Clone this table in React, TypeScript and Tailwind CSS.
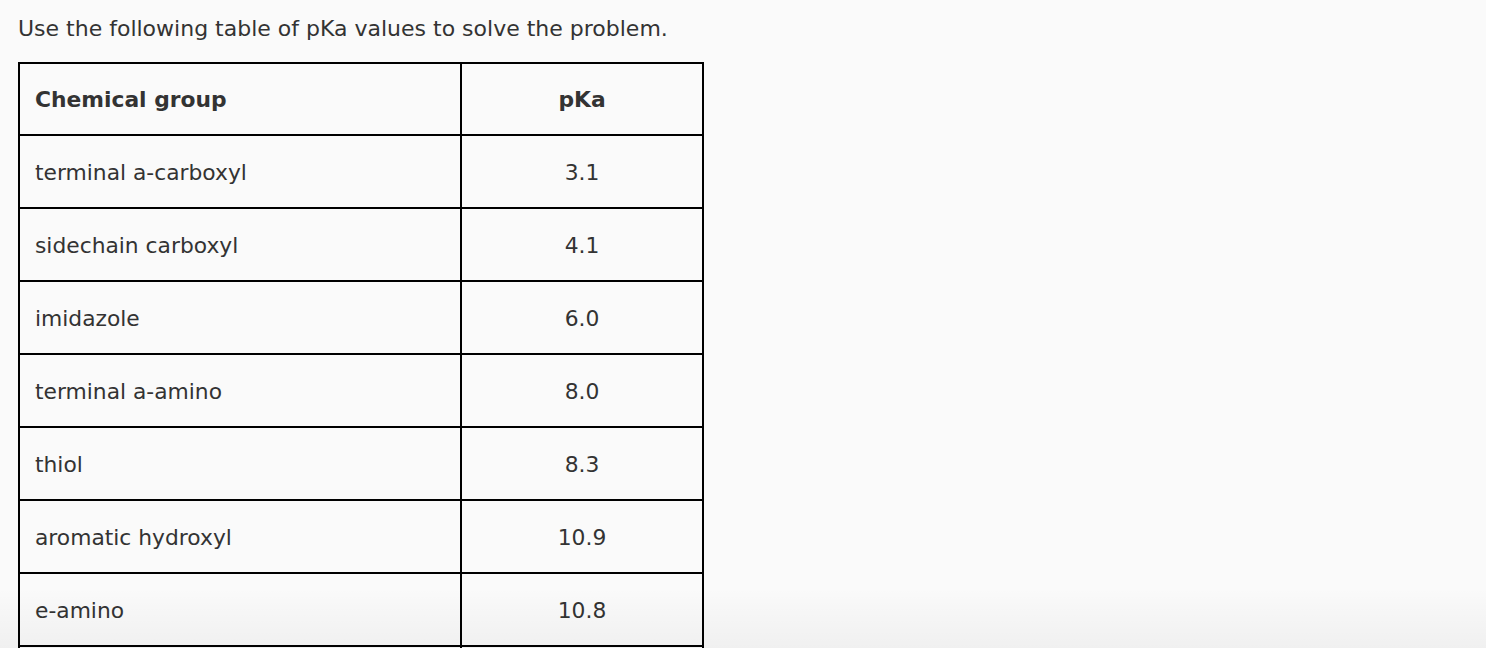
import React from "react";

const rows: [string, string][] = [
  ["terminal a-carboxyl", "3.1"],
  ["sidechain carboxyl", "4.1"],
  ["imidazole", "6.0"],
  ["terminal a-amino", "8.0"],
  ["thiol", "8.3"],
  ["aromatic hydroxyl", "10.9"],
  ["e-amino", "10.8"],
];

export default function App() {
  return (
    <div
      className="relative h-[648px] w-full overflow-hidden bg-[#fafafa] text-[#333]"
      style={{ fontFamily: '"DejaVu Sans", Verdana, sans-serif' }}
    >
      <div className="pl-[18px] pt-[14px]">
        <p className="text-[22px] leading-[30px]">
          Use the following table of pKa values to solve the problem.
        </p>
        <table className="mt-[18px] w-[686px] border-collapse text-[21.8px]">
          <colgroup>
            <col className="w-[442px]" />
            <col />
          </colgroup>
          <thead>
            <tr className="h-[72px]">
              <th className="border-2 border-black pl-[15px] pt-[3px] text-left font-bold">
                Chemical group
              </th>
              <th className="border-2 border-black pt-[3px] text-center font-bold">pKa</th>
            </tr>
          </thead>
          <tbody>
            {rows.map(([g, v]) => (
              <tr key={g} className="h-[73px]">
                <td className="border-2 border-black pl-[15px] pt-[3px]">{g}</td>
                <td className="border-2 border-black pt-[3px] text-center">{v}</td>
              </tr>
            ))}
            <tr className="h-[73px]">
              <td className="border-2 border-black pl-[15px]">&nbsp;</td>
              <td className="border-2 border-black text-center">&nbsp;</td>
            </tr>
          </tbody>
        </table>
      </div>
      <div className="pointer-events-none absolute inset-x-0 bottom-0 h-[60px] bg-gradient-to-b from-transparent to-black/[0.04]" />
    </div>
  );
}
